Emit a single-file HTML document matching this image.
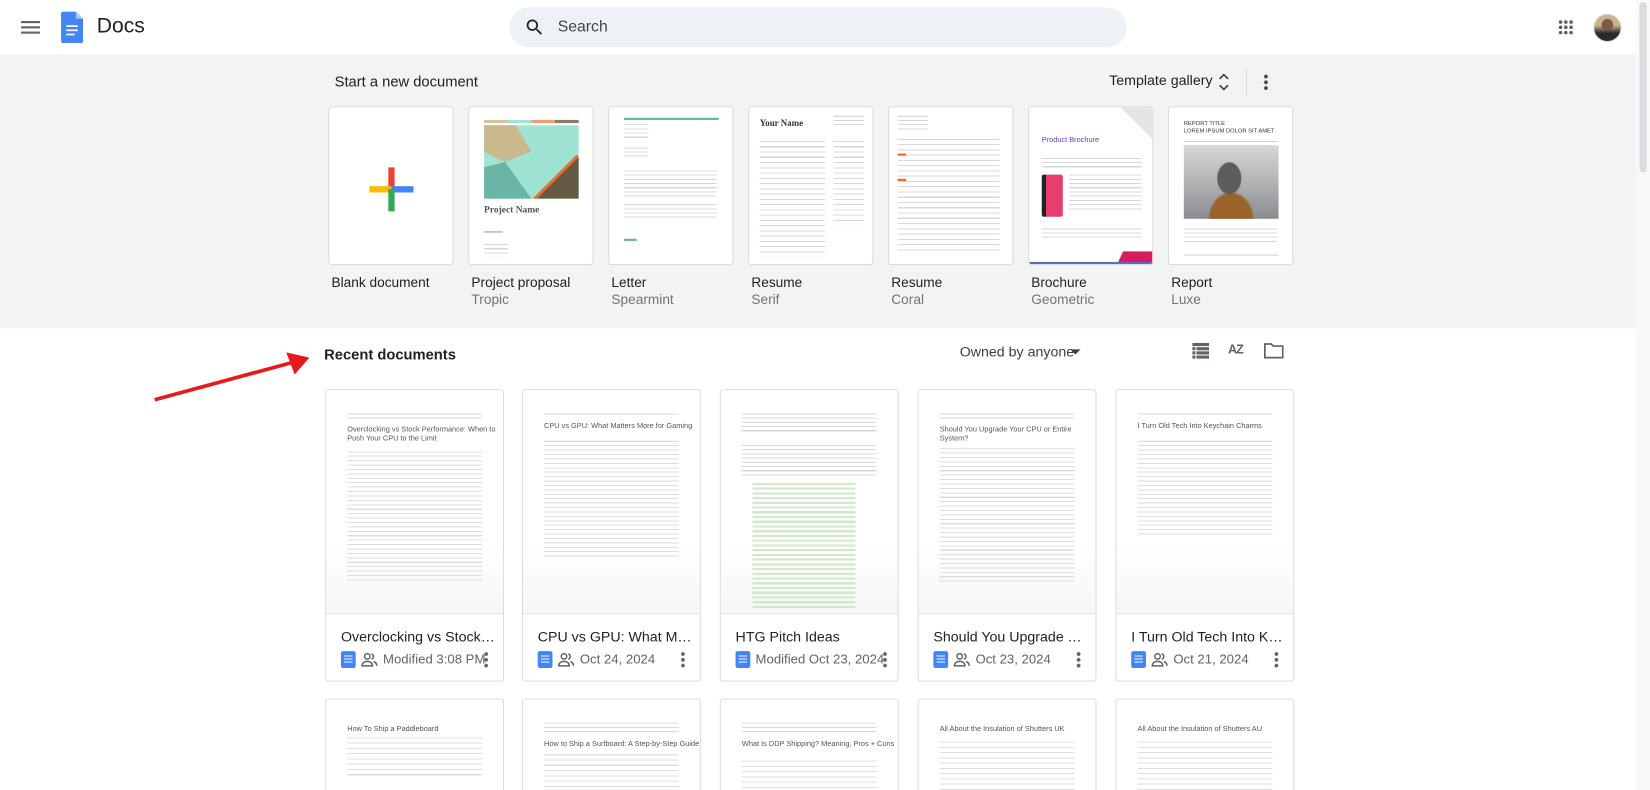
<!DOCTYPE html>
<html><head><meta charset="utf-8"><style>
*{margin:0;padding:0;box-sizing:border-box}
html,body{width:1650px;height:790px;overflow:hidden;background:#fff;font-family:"Liberation Sans",Arial,sans-serif;color:#202124}
#w{position:absolute;left:0;top:0;width:1568px;height:751px;transform:scale(1.05230,1.0519);transform-origin:0 0;overflow:hidden}
.a{position:absolute}
.gray{left:0;top:52px;width:1555px;height:260px;background:#f1f3f4}
.sb{left:1555px;top:0;width:13px;height:751px;background:#f8f9fa}
.sbt{left:1558px;top:2px;width:7px;height:162px;background:#dadce0;border-radius:4px}
.search{left:484px;top:7px;width:587px;height:38px;background:#eef2f6;border-radius:20px}
.tp{top:101px;width:119px;height:151px;background:#fff;border:1px solid #dadce0;border-radius:3px;overflow:hidden}
.tl{top:261px;font-size:13px;color:#202124}
.ts{top:277px;font-size:13px;color:#70757a}
.ln{position:absolute;height:2px;background:#cfd2d6}
.card{top:370px;width:170px;height:278px;border:1px solid #dadce0;border-radius:3px;overflow:hidden;background:#fff}
.card2{top:664px;width:170px;height:100px;border:1px solid #dadce0;border-radius:3px;overflow:hidden;background:#fff}
.prev{position:absolute;left:0;top:0;width:100%;height:213px;border-bottom:1px solid #e3e3e3;background:linear-gradient(#fff 70%,#f6f6f6)}
.lines{position:absolute;left:20px;right:20px;background:repeating-linear-gradient(#d6d8db 0 1px,transparent 1px 4px)}
.ct{position:absolute;left:14px;top:227px;font-size:13.5px;color:#202124;white-space:nowrap;width:148px;overflow:hidden;text-overflow:ellipsis}
.meta{position:absolute;left:14px;top:248px;font-size:12.5px;color:#5f6368;display:flex;align-items:center;gap:5px}
.di{width:14px;height:16px;background:#4285f4;border-radius:2px;position:relative}
.di:after{content:"";position:absolute;left:3px;top:4px;width:8px;height:7px;background:repeating-linear-gradient(#fff 0 1px,transparent 1px 3px)}
.dots{position:absolute;right:14px;top:248px;width:4px;height:16px;background:radial-gradient(circle,#5f6368 1.6px,transparent 2px) 0 0/4px 5.5px repeat-y}
.tt{position:absolute;left:20px;font-size:7px;color:#555;line-height:9px}
</style></head><body><div id="w">
<svg width="0" height="0" style="position:absolute"><symbol id="pp" viewBox="0 0 16 16"><circle cx="6" cy="5" r="2.6" fill="none" stroke="#5f6368" stroke-width="1.4"/><path d="M1 14c0-3 2.5-4.3 5-4.3s5 1.3 5 4.3z" fill="none" stroke="#5f6368" stroke-width="1.4"/><path d="M10 2.6a2.6 2.6 0 0 1 0 5M12 10c2 .5 3 1.8 3 4" fill="none" stroke="#5f6368" stroke-width="1.4"/></symbol></svg>
<svg class="a" style="left:20px;top:18px" width="18" height="16"><g fill="#5f6368"><rect y="2" width="18" height="2"/><rect y="7" width="18" height="2"/><rect y="12" width="18" height="2"/></g></svg>
<svg class="a" style="left:58px;top:11px" width="21" height="30" viewBox="0 0 21 30"><path d="M2 0h12l7 7v21a2 2 0 0 1-2 2H2a2 2 0 0 1-2-2V2a2 2 0 0 1 2-2z" fill="#4285f4"/><path d="M14 0v7h7z" fill="#a1c2fa"/><g fill="#fff"><rect x="5" y="13" width="11" height="1.6"/><rect x="5" y="17" width="11" height="1.6"/><rect x="5" y="21" width="8" height="1.6"/></g></svg>
<div class="a" style="left:92px;top:14px;font-size:20px;color:#202124">Docs</div>
<div class="a search"></div>
<svg class="a" style="left:498px;top:16px" width="20" height="20" viewBox="0 0 24 24"><path fill="#202124" d="M15.5 14h-.8l-.3-.3A6.5 6.5 0 1 0 9.5 16a6.5 6.5 0 0 0 4.2-1.6l.3.3v.8l5 5 1.5-1.5-5-5zm-6 0a4.5 4.5 0 1 1 0-9 4.5 4.5 0 0 1 0 9z"/></svg>
<div class="a" style="left:530px;top:17px;font-size:15px;color:#444">Search</div>
<svg class="a" style="left:1480px;top:18px" width="16" height="16"><g fill="#5f6368"><circle cx="3" cy="3" r="1.7"/><circle cx="8" cy="3" r="1.7"/><circle cx="13" cy="3" r="1.7"/><circle cx="3" cy="8" r="1.7"/><circle cx="8" cy="8" r="1.7"/><circle cx="13" cy="8" r="1.7"/><circle cx="3" cy="13" r="1.7"/><circle cx="8" cy="13" r="1.7"/><circle cx="13" cy="13" r="1.7"/></g></svg>
<div class="a" style="left:1514px;top:13px;width:27px;height:27px;border-radius:50%;background:radial-gradient(circle at 50% 38%,#7a5a48 0 5px,transparent 6px),linear-gradient(#c9b38c 0 40%,#2a2a2a 70%);border:1px solid #ddd"></div>
<div class="a sb"></div><div class="a sbt"></div>
<div class="a gray"></div>
<div class="a" style="left:318px;top:69px;font-size:14px">Start a new document</div>
<div class="a" style="left:1054px;top:69px;font-size:13.5px">Template gallery</div>
<svg class="a" style="left:1157px;top:69px" width="12" height="18"><path d="M2 6l4-4 4 4M2 12l4 4 4-4" stroke="#444" stroke-width="1.6" fill="none"/></svg>
<div class="a" style="left:1184px;top:66px;width:1px;height:26px;background:#dadce0"></div>
<div class="a" style="left:1201px;top:70px;width:4px;height:16px;background:radial-gradient(circle,#444 1.6px,transparent 2px) 0 0/4px 5.5px repeat-y"></div>
<div class="a tp" style="left:312px"><svg style="position:absolute;left:38px;top:57px" width="42" height="42"><rect x="18" y="0" width="6" height="21" fill="#ea4335"/><rect x="0" y="18" width="21" height="6" fill="#fbbc04"/><rect x="21" y="18" width="21" height="6" fill="#4285f4"/><rect x="18" y="21" width="6" height="21" fill="#34a853"/></svg></div>
<div class="a tp" style="left:445px"><div style="position:absolute;left:14px;top:12px;width:90px;height:3px;background:linear-gradient(90deg,#d6c59a 25%,#9fe3d3 25% 50%,#f49a75 50% 75%,#8b7c6a 75%)"></div><svg style="position:absolute;left:14px;top:17px" width="90" height="70"><rect width="90" height="70" fill="#9fe3d3"/><polygon points="0,0 30,0 45,25 20,35 0,25" fill="#c9b98d"/><polygon points="0,40 20,35 45,70 0,70" fill="#6ab5a6"/><polygon points="90,30 90,70 50,70" fill="#665a44"/><polygon points="88,28 90,30 50,70 46,70" fill="#f06a2c"/></svg><div style="position:absolute;left:14px;top:92px;font:bold 9px 'Liberation Serif',serif;color:#555">Project Name</div><div class="ln" style="left:14px;top:118px;width:18px;height:1px;background:#999"></div><div class="lines" style="left:14px;right:80px;top:130px;height:12px"></div></div>
<div class="a tp" style="left:578px"><div style="position:absolute;left:14px;top:10px;width:90px;height:2px;background:#57bb8a"></div><div class="lines" style="left:14px;right:80px;top:16px;height:14px"></div><div class="lines" style="left:14px;right:80px;top:38px;height:10px"></div><div class="lines" style="left:14px;right:15px;top:60px;height:28px"></div><div class="lines" style="left:14px;right:15px;top:92px;height:16px"></div><div style="position:absolute;left:14px;top:125px;width:12px;height:2px;background:#57bb8a"></div></div>
<div class="a tp" style="left:711px"><div style="position:absolute;left:10px;top:10px;font:bold 8.5px 'Liberation Serif',serif;color:#333">Your Name</div><div class="lines" style="left:80px;right:8px;top:8px;height:12px"></div><div class="lines" style="left:10px;right:45px;top:32px;height:110px;background:repeating-linear-gradient(#d6d8db 0 1px,transparent 1px 5px)"></div><div class="lines" style="left:80px;right:8px;top:32px;height:80px;background:repeating-linear-gradient(#d6d8db 0 1px,transparent 1px 5px)"></div></div>
<div class="a tp" style="left:844px"><div class="lines" style="left:8px;right:80px;top:8px;height:14px"></div><div class="lines" style="left:8px;right:12px;top:30px;height:110px;background:repeating-linear-gradient(#d6d8db 0 1px,transparent 1px 5px)"></div><div style="position:absolute;left:8px;top:44px;width:8px;height:2px;background:#f46524"></div><div style="position:absolute;left:8px;top:68px;width:8px;height:2px;background:#f46524"></div></div>
<div class="a tp" style="left:977px"><div style="position:absolute;right:0;top:0;width:30px;height:30px;background:linear-gradient(45deg,#fff 50%,#e4e4e4 50%)"></div><div style="position:absolute;left:12px;top:28px;font-size:7px;color:#673ab7">Product Brochure</div><div class="lines" style="left:12px;right:10px;top:48px;height:10px"></div><div style="position:absolute;left:12px;top:64px;width:20px;height:40px;background:linear-gradient(90deg,#222 20%,#e73e6f 20%);border-radius:2px"></div><div class="lines" style="left:38px;right:10px;top:64px;height:36px"></div><div class="lines" style="left:12px;right:10px;top:115px;height:12px"></div><div style="position:absolute;right:0;bottom:0;width:36px;height:12px;background:linear-gradient(115deg,transparent 20%,#d81b60 20%)"></div><div style="position:absolute;left:0;right:0;bottom:0;height:2px;background:#5c6bc0"></div></div>
<div class="a tp" style="left:1110px"><div style="position:absolute;left:14px;top:13px;font-size:5.5px;line-height:7px;color:#333">REPORT TITLE<br>LOREM IPSUM DOLOR SIT AMET</div><div style="position:absolute;left:14px;top:32px;width:90px;height:1px;background:#e2cdb0"></div><div style="position:absolute;left:14px;top:36px;width:90px;height:70px;background:radial-gradient(ellipse 12px 16px at 48% 45%,#5c5c5c 90%,transparent),radial-gradient(ellipse 22px 26px at 50% 100%,#9a6428 90%,transparent),linear-gradient(#d8d8d8,#8a8d90)"></div><div class="lines" style="left:14px;right:14px;top:115px;height:16px"></div><div style="position:absolute;left:14px;top:140px;width:90px;height:1px;background:#e2cdb0"></div></div>
<div class="a tl" style="left:315px">Blank document</div>
<div class="a tl" style="left:448px">Project proposal</div><div class="a ts" style="left:448px">Tropic</div>
<div class="a tl" style="left:581px">Letter</div><div class="a ts" style="left:581px">Spearmint</div>
<div class="a tl" style="left:714px">Resume</div><div class="a ts" style="left:714px">Serif</div>
<div class="a tl" style="left:847px">Resume</div><div class="a ts" style="left:847px">Coral</div>
<div class="a tl" style="left:980px">Brochure</div><div class="a ts" style="left:980px">Geometric</div>
<div class="a tl" style="left:1113px">Report</div><div class="a ts" style="left:1113px">Luxe</div>
<div class="a" style="left:308px;top:329px;font-size:14px;font-weight:bold;color:#202124">Recent documents</div>
<div class="a" style="left:912px;top:327px;font-size:13.5px;color:#3c4043">Owned by anyone</div>
<svg class="a" style="left:1017px;top:332px" width="10" height="6"><path d="M0 0h10L5 5z" fill="#3c4043"/></svg>
<svg class="a" style="left:1133px;top:326px" width="16" height="15"><g fill="#5f6368"><rect x="0" y="0" width="16" height="3"/><rect x="0" y="4" width="3" height="3"/><rect x="4" y="4" width="12" height="3"/><rect x="0" y="8" width="3" height="3"/><rect x="4" y="8" width="12" height="3"/><rect x="0" y="12" width="3" height="3"/><rect x="4" y="12" width="12" height="3"/></g></svg>
<div class="a" style="left:1167px;top:325px;font-size:12px;font-weight:bold;color:#5f6368;letter-spacing:-1px">AZ</div>
<svg class="a" style="left:1201px;top:325px" width="19" height="16"><path d="M1 2h6l2 2h9v11H1z" fill="none" stroke="#5f6368" stroke-width="1.6"/></svg>
<svg class="a" style="left:140px;top:332px" width="160" height="55"><path d="M7 48L140 12" stroke="#e8191c" stroke-width="3.5"/><path d="M154 8L132 3 140 24z" fill="#e8191c"/></svg>
<div class="a card" style="left:309px"><div class="prev"><div class="lines" style="top:22px;height:6px"></div><div class="tt" style="top:33px">Overclocking vs Stock Performance: When to Push Your CPU to the Limit</div><div class="lines" style="top:58px;height:126px;background:repeating-linear-gradient(#dcdde0 0 1px,transparent 1px 4.2px)"></div></div><div class="ct">Overclocking vs Stock Performance</div><div class="meta"><div class="di"></div><svg width="16" height="16"><use href="#pp"/></svg><span>Modified 3:08 PM</span></div><div class="dots"></div></div>
<div class="a card" style="left:496px"><div class="prev"><div class="lines" style="top:22px;height:3px"></div><div class="tt" style="top:30px">CPU vs GPU: What Matters More for Gaming</div><div class="lines" style="top:48px;height:110px;background:repeating-linear-gradient(#dcdde0 0 1px,transparent 1px 4.2px)"></div></div><div class="ct">CPU vs GPU: What Matters More</div><div class="meta"><div class="di"></div><svg width="16" height="16"><use href="#pp"/></svg><span>Oct 24, 2024</span></div><div class="dots"></div></div>
<div class="a card" style="left:684px"><div class="prev"><div class="lines" style="top:22px;height:20px"></div><div class="lines" style="top:52px;height:30px"></div><div class="lines" style="left:30px;right:40px;top:88px;height:120px;background:repeating-linear-gradient(#cfe9ca 0 2px,transparent 2px 4.5px)"></div></div><div class="ct">HTG Pitch Ideas</div><div class="meta"><div class="di"></div><span>Modified Oct 23, 2024</span></div><div class="dots" style="right:10px"></div></div>
<div class="a card" style="left:872px"><div class="prev"><div class="lines" style="top:22px;height:6px"></div><div class="tt" style="top:33px">Should You Upgrade Your CPU or Entire System?</div><div class="lines" style="top:55px;height:130px;background:repeating-linear-gradient(#dcdde0 0 1px,transparent 1px 4.2px)"></div></div><div class="ct">Should You Upgrade Your CPU</div><div class="meta"><div class="di"></div><svg width="16" height="16"><use href="#pp"/></svg><span>Oct 23, 2024</span></div><div class="dots"></div></div>
<div class="a card" style="left:1060px"><div class="prev"><div class="lines" style="top:22px;height:3px"></div><div class="tt" style="top:30px">I Turn Old Tech Into Keychain Charms</div><div class="lines" style="top:48px;height:90px;background:repeating-linear-gradient(#dcdde0 0 1px,transparent 1px 4.2px)"></div></div><div class="ct">I Turn Old Tech Into Keychain</div><div class="meta"><div class="di"></div><svg width="16" height="16"><use href="#pp"/></svg><span>Oct 21, 2024</span></div><div class="dots"></div></div>
<div class="a card2" style="left:309px"><div class="tt" style="top:24px">How To Ship a Paddleboard</div><div class="lines" style="top:36px;height:40px;background:repeating-linear-gradient(#dcdde0 0 1px,transparent 1px 5px)"></div></div>
<div class="a card2" style="left:496px"><div class="lines" style="top:22px;height:10px"></div><div class="tt" style="top:38px">How to Ship a Surfboard: A Step-by-Step Guide</div><div class="lines" style="top:52px;height:40px;background:repeating-linear-gradient(#dcdde0 0 1px,transparent 1px 5px)"></div></div>
<div class="a card2" style="left:684px"><div class="lines" style="top:22px;height:10px"></div><div class="tt" style="top:38px">What Is DDP Shipping? Meaning, Pros + Cons</div><div class="lines" style="top:58px;height:40px;background:repeating-linear-gradient(#dcdde0 0 1px,transparent 1px 5px)"></div></div>
<div class="a card2" style="left:872px"><div class="tt" style="top:24px">All About the Insulation of Shutters UK</div><div class="lines" style="top:40px;height:50px;background:repeating-linear-gradient(#dcdde0 0 1px,transparent 1px 5px)"></div></div>
<div class="a card2" style="left:1060px"><div class="tt" style="top:24px">All About the Insulation of Shutters AU</div><div class="lines" style="top:40px;height:50px;background:repeating-linear-gradient(#dcdde0 0 1px,transparent 1px 5px)"></div></div>
</div></body></html>
